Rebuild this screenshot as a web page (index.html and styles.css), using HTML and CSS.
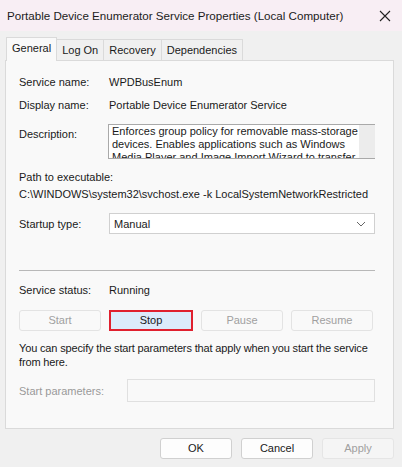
FILE: index.html
```html
<!DOCTYPE html>
<html>
<head>
<meta charset="utf-8">
<link rel="stylesheet" href="styles.css">
</head>
<body>
<div class="window">
  <div class="titlebar">
    <span class="title">Portable Device Enumerator Service Properties (Local Computer)</span>
    <svg class="close" width="12" height="12" viewBox="0 0 12 12"><path d="M1 1L11 11M11 1L1 11" stroke="#222" stroke-width="1.1" fill="none"/></svg>
  </div>
  <div class="body">
    <div class="tabs">
      <div class="tab active">General</div>
      <div class="tab">Log On</div>
      <div class="tab">Recovery</div>
      <div class="tab">Dependencies</div>
    </div>
    <div class="panel">
      <div class="row r1"><span class="label">Service name:</span><span class="value">WPDBusEnum</span></div>
      <div class="row r2"><span class="label">Display name:</span><span class="value">Portable Device Enumerator Service</span></div>
      <div class="row r3">
        <span class="label desc-label">Description:</span>
        <div class="descbox">
          <div class="desctext">Enforces group policy for removable mass-storage devices. Enables applications such as Windows Media Player and Image Import Wizard to transfer</div>
          <div class="scroll"></div>
        </div>
      </div>
      <div class="path-label">Path to executable:</div>
      <div class="path">C:\WINDOWS\system32\svchost.exe -k LocalSystemNetworkRestricted</div>
      <div class="row r4"><span class="label">Startup type:</span>
        <div class="combo"><span>Manual</span>
          <svg width="10" height="6" viewBox="0 0 10 6"><path d="M1 1L5 5L9 1" stroke="#666" stroke-width="1" fill="none"/></svg>
        </div>
      </div>
      <div class="sep"></div>
      <div class="row r5"><span class="label">Service status:</span><span class="value">Running</span></div>
      <div class="btnrow">
        <div class="btn dis">Start</div>
        <div class="btn stop">Stop</div>
        <div class="btn dis">Pause</div>
        <div class="btn dis">Resume</div>
      </div>
      <div class="note">You can specify the start parameters that apply when you start the service from here.</div>
      <div class="row r6"><span class="label dim">Start parameters:</span><div class="param"></div></div>
    </div>
    <div class="footer">
      <div class="fbtn">OK</div>
      <div class="fbtn">Cancel</div>
      <div class="fbtn dis">Apply</div>
    </div>
  </div>
</div>
</body>
</html>
```
FILE: styles.css
```css
html, body { margin: 0; padding: 0; }
body { width: 402px; height: 467px; overflow: hidden; font-family: "Liberation Sans", Arial, sans-serif; font-size: 11px; color: #1a1a1a; background: #f0f0f0; }
.window { width: 402px; height: 467px; display: flex; flex-direction: column; }
.titlebar { height: 31px; background: #f8eef4; display: flex; align-items: center; justify-content: space-between; padding: 0 11px 0 7px; box-sizing: border-box; }
.title { font-size: 11.6px; color: #1b1b1b; }
.body { flex: 1; background: #f0f0f0; padding: 6px 8px 0 5px; }
.tabs { display: flex; height: 23px; align-items: flex-end; padding-left: 2px; }
.tab { height: 21px; box-sizing: border-box; border: 1px solid #dadada; border-bottom: none; background: #f0f0f0; padding: 0 5px; line-height: 21px; margin-left: -1px; }
.tab.active { height: 24px; background: #f9f9f9; position: relative; z-index: 1; margin-bottom: -1px; padding: 0 5px; line-height: 20px; }
.panel { height: 369px; box-sizing: border-box; border: 1px solid #dadada; background: #f9f9f9; padding: 0 17px 0 13px; }
.row { display: flex; align-items: center; }
.label { width: 90px; flex: none; }
.r1 { margin-top: 13px; height: 16px; }
.r2 { margin-top: 7px; height: 16px; }
.r3 { margin-top: 11px; align-items: flex-start; }
.desc-label { margin-top: 4px; }
.descbox { width: 267px; height: 35px; box-sizing: border-box; border: 1px solid #a9a9a9; border-right: none; display: flex; overflow: hidden; margin-left: -1px; background: #fff; }
.desctext { flex: 1; padding: 0 0 0 3px; line-height: 13px; }
.scroll { width: 16px; flex: none; background: #ececec; }
.path-label { margin-top: 10px; line-height: 16px; }
.path { line-height: 16px; margin-top: 1px; white-space: nowrap; }
.r4 { margin-top: 11px; }
.combo { width: 266px; height: 21px; box-sizing: border-box; border: 1px solid #d0d0d0; background: #fff; display: flex; align-items: center; justify-content: space-between; padding: 0 8px 0 4px; }
.sep { height: 1px; background: #b8b8b8; margin: 36px 1px 0 0; }
.r5 { margin-top: 11px; height: 16px; }
.btnrow { display: flex; gap: 8px; margin-top: 12px; }
.btn { width: 82px; height: 21px; box-sizing: border-box; border: 1px solid #e3e3e3; border-radius: 3px; background: #f9f9f9; text-align: center; line-height: 19px; }
.btn.dis, .fbtn.dis { color: #a0a0a0; }
.btn.stop { width: 84px; border: 2px solid #e0202e; border-radius: 0; background: #dcebfb; color: #1a1a1a; line-height: 17px; }
.note { margin-top: 10px; line-height: 14px; letter-spacing: -0.15px; margin-right: -6px; }
.r6 { margin-top: 10px; }
.dim { color: #9a9a9a; width: 108px; }
.param { width: 248px; height: 23px; box-sizing: border-box; border: 1px solid #e0e0e0; background: #f9f9f9; }
.footer { display: flex; justify-content: flex-end; gap: 9px; padding-top: 9px; }
.fbtn { width: 72px; height: 21px; box-sizing: border-box; border: 1px solid #d0d0d0; border-radius: 3px; background: #fdfdfd; text-align: center; line-height: 19px; }
.fbtn.dis { background: #f5f5f5; border-color: #e5e5e5; }
```
